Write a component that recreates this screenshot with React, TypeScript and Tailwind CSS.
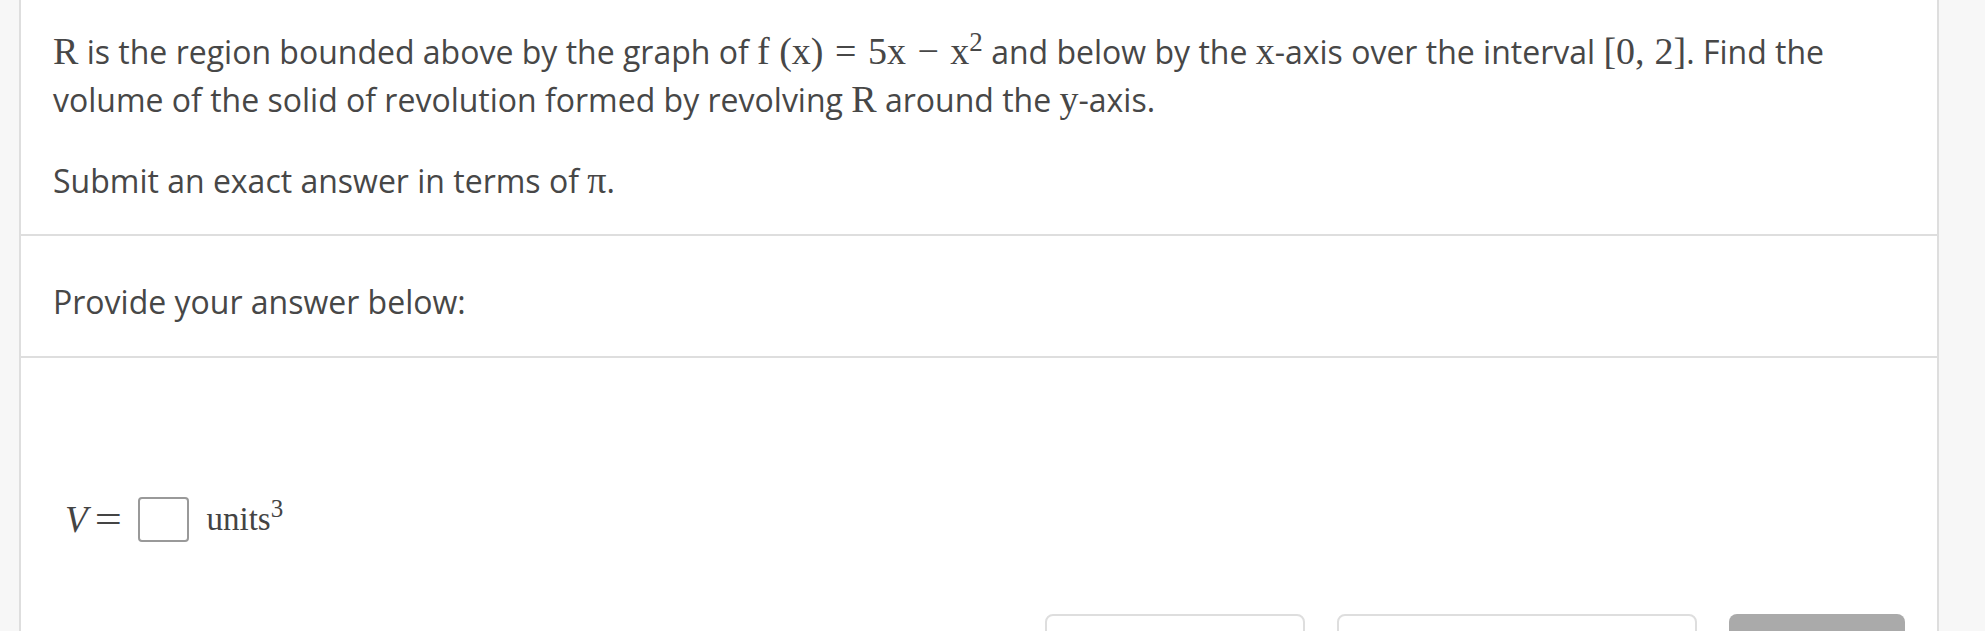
import type { ReactNode } from 'react';

const M = ({ children }: { children: ReactNode }) => (
  <span className="font-['Liberation_Serif','Times_New_Roman',serif] text-[38px] leading-none">{children}</span>
);

const Op = ({ children }: { children: ReactNode }) => <span className="mx-[2px]">{children}</span>;

const App = () => {
  return (
    <div className="h-[631px] overflow-hidden bg-[#f7f7f7] font-['Open_Sans',sans-serif] text-[#474747]">
      <div className="ml-[19px] w-[1920px] min-h-[631px] border-x-2 border-[#dedede] bg-white">
        {/* question */}
        <section className="border-b-2 border-[#dedede] px-[32px] pt-[28px] pb-[29px] text-[32px] leading-[48px]">
          <p>
            <M>R</M> is the region bounded above by the graph of{' '}
            <M>
              f (x) <Op>=</Op> 5x <Op>−</Op> x<sup className="text-[27px]">2</sup>
            </M>{' '}
            and below by the <M>x</M>-axis over the interval{' '}
            <M>
              [0,<span className="ml-[10px]">2</span>]
            </M>
            . Find the volume of the solid of revolution formed by revolving <M>R</M> around the <M>y</M>-axis.
          </p>
          <p className="mt-[33px]">
            Submit an exact answer in terms of <M>π</M>.
          </p>
        </section>

        <section className="border-b-2 border-[#dedede] px-[32px] pt-[42px] pb-[30px] text-[32px] leading-[48px]">
          <p>Provide your answer below:</p>
        </section>

        {/* answer */}
        <section className="px-[32px] pt-[139px]">
          <div className="flex h-[45px] items-center pl-[12px] font-['Liberation_Serif','Times_New_Roman',serif] text-[37px] text-[#444]">
            <span className="italic">V</span>
            <span className="ml-[10px] inline-block scale-x-[1.3]">=</span>
            <input
              type="text"
              aria-label="answer"
              className="ml-[20px] h-[45px] w-[51px] rounded-[4px] border-2 border-[#999] bg-white outline-none"
            />
            <span className="ml-[17px] text-[33px]">
              units<sup className="text-[25px]">3</sup>
            </span>
          </div>

          <div className="mt-[72px] flex justify-end gap-[32px]">
            <button className="h-[56px] w-[260px] rounded-lg border-2 border-[#dedede] bg-white" aria-label="option one" />
            <button className="h-[56px] w-[360px] rounded-lg border-2 border-[#dedede] bg-white" aria-label="option two" />
            <button className="h-[56px] w-[176px] rounded-lg bg-[#aaaaaa]" aria-label="submit" />
          </div>
        </section>
      </div>
    </div>
  );
};

export default App;
